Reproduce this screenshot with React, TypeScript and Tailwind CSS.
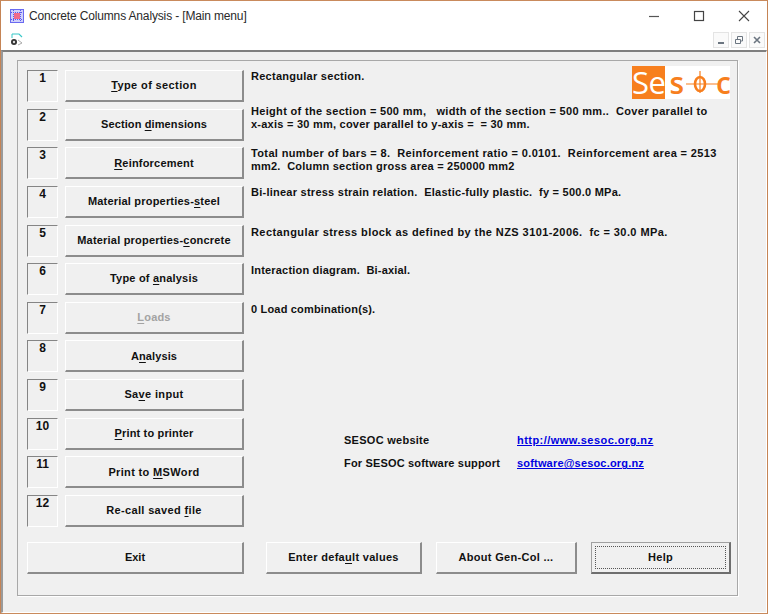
const sans = "font-['Liberation_Sans',Arial,sans-serif]";

type Row = { label: React.ReactNode; labelCls?: string; desc?: React.ReactNode; descCls?: string; disabled?: boolean };

const rows: Row[] = [
  {
    label: <><u>T</u>ype of section</>,
    labelCls: "tracking-[0.38px]",
    desc: "Rectangular section.",
    descCls: "tracking-[0.27px]",
  },
  {
    label: <>Section <u>d</u>imensions</>,
    labelCls: "tracking-[0.12px]",
    desc: (
      <>
        Height of the section = 500 mm,&nbsp;&nbsp; width of the section = 500 mm..&nbsp; Cover parallel to
        <br />
        <span className="tracking-[0.24px]">x-axis = 30 mm, cover parallel to y-axis = &nbsp;= 30 mm.</span>
      </>
    ),
    descCls: "-mt-[4px] h-[42.64px]",
  },
  {
    label: <><u>R</u>einforcement</>,
    desc: (
      <>
        <span className="tracking-[0.365px]">Total number of bars = 8.&nbsp; Reinforcement ratio = 0.0101.&nbsp; Reinforcement area = 2513</span>
        <br />
        <span className="tracking-[0.22px]">mm2.&nbsp; Column section gross area = 250000 mm2</span>
      </>
    ),
  },
  {
    label: <>Material properties-<u>s</u>teel</>,
    desc: "Bi-linear stress strain relation.  Elastic-fully plastic.  fy = 500.0 MPa.",
    descCls: "tracking-[0.25px]",
  },
  {
    label: <>Material properties-<u>c</u>oncrete</>,
    desc: "Rectangular stress block as defined by the NZS 3101-2006.  fc = 30.0 MPa.",
    descCls: "pt-[1px] tracking-[0.42px]",
  },
  {
    label: <>Type of <u>a</u>nalysis</>,
    desc: "Interaction diagram.  Bi-axial.",
    descCls: "pt-[1px] tracking-[0.19px]",
  },
  {
    label: <><u>L</u>oads</>,
    desc: "0 Load combination(s).",
    descCls: "pt-[1px] tracking-[0.18px]",
    disabled: true,
  },
  { label: <>A<u>n</u>alysis</>, labelCls: "tracking-[0.1px]" },
  { label: <>Sa<u>v</u>e input</>, labelCls: "tracking-[0.35px]" },
  { label: <><u>P</u>rint to printer</>, labelCls: "tracking-[0.15px]" },
  { label: <>Print to <u>M</u>SWord</>, labelCls: "tracking-[0.35px]" },
  { label: <>Re-call saved <u>f</u>ile</>, labelCls: "tracking-[0.35px]" },
];

function Btn({
  children,
  className = "",
  labelCls = "tracking-[0.2px]",
  disabled,
}: {
  children: React.ReactNode;
  className?: string;
  labelCls?: string;
  disabled?: boolean;
}) {
  return (
    <div
      className={
        "flex h-[32px] items-center justify-center border-t border-l border-t-white border-l-white border-r-2 border-b-2 border-r-[#8c8c8c] border-b-[#8c8c8c] text-[11px] font-bold underline-offset-2 " +
        (disabled ? "text-[#a3a3a3] " : "text-[#111] ") +
        className
      }
    >
      <span className={labelCls}>{children}</span>
    </div>
  );
}

function Logo() {
  const open = "font-['Open_Sans',sans-serif]";
  return (
    <div className={"absolute top-[5px] right-[7px] flex h-[33px] w-[98px] bg-white text-[#f77f1e] " + open}>
      <div className="flex w-[36px] items-center justify-center bg-[#f77f1e] text-[31px] leading-none tracking-[-0.5px] text-white">Se</div>
      <div className="flex flex-1 items-center pl-[4px]">
        <span className="text-[30px] leading-none font-semibold">s</span>
        <svg width="33" height="33" viewBox="0 0 33 33" className="ml-[2px] shrink-0">
          <ellipse cx="14" cy="18" rx="5" ry="7" fill="none" stroke="#f77f1e" strokeWidth="2.6" />
          <path d="M0 18H32M14 5V27" stroke="#f77f1e" strokeWidth="1.2" />
        </svg>
        <span className="-ml-[3px] text-[30px] leading-none font-semibold">c</span>
      </div>
    </div>
  );
}

export default function App() {
  return (
    <div className={"flex h-[614px] w-[768px] flex-col overflow-hidden border-x border-y border-x-[#c58455] border-y-[#c98a5c] bg-white text-[#111] " + sans}>
      {/* title bar */}
      <div className="flex h-[29px] shrink-0 items-center pl-[9px]">
        <svg width="14" height="14" viewBox="0 0 14 14" className="shrink-0">
          <rect x="0.5" y="0.5" width="13" height="13" fill="#cfd0fa" stroke="#6a6af0" />
          <path d="M1 3.5H13M1 10.5H13M3.5 1V13M10.5 1V13" stroke="#5a5af0" strokeDasharray="1 1" />
          <rect x="4" y="4" width="6" height="6" fill="#f06a8a" />
        </svg>
        <span className="ml-[5px] text-[12px] tracking-[-0.15px] text-[#2a2a2a]">Concrete Columns Analysis - [Main menu]</span>
        <div className="ml-auto flex items-center">
          <svg width="12" height="12" viewBox="0 0 12 12" className="mr-[33px]"><path d="M1 6.5H11" stroke="#555" strokeWidth="1.2" /></svg>
          <svg width="12" height="12" viewBox="0 0 12 12" className="mr-[33px]"><rect x="1.5" y="1.5" width="9" height="9" fill="none" stroke="#444" strokeWidth="1.2" /></svg>
          <svg width="12" height="12" viewBox="0 0 12 12" className="mr-[17px]"><path d="M1 1L11 11M11 1L1 11" stroke="#444" strokeWidth="1.1" /></svg>
        </div>
      </div>

      {/* menu bar */}
      <div className="flex h-[20px] shrink-0 items-center pl-[9px]">
        <svg width="14" height="14" viewBox="0 0 14 14">
          <path d="M2 1H9L12 4" fill="none" stroke="#38c8c8" strokeWidth="1.2" />
          <path d="M2 1V5" stroke="#38c8c8" />
          <circle cx="4" cy="9" r="3" fill="#333" />
          <circle cx="4" cy="9" r="1.2" fill="#ddd" />
          <path d="M8 7L12 10L8 12" fill="none" stroke="#aaa" />
        </svg>
        <div className="ml-auto mr-[2px] flex gap-[2px]">
          {["min", "restore", "close"].map((k) => (
            <div key={k} className="flex h-[16px] w-[16px] items-center justify-center border border-[#e4e4e4] bg-[#fafafa]">
              <svg width="10" height="10" viewBox="0 0 10 10">
                {k === "min" && <path d="M2 8H8" stroke="#6b7580" strokeWidth="2" />}
                {k === "restore" && <path d="M1.5 4.5H6.5V8.5H1.5ZM3.5 4V1.5H8.5V6H7" fill="none" stroke="#6b7580" />}
                {k === "close" && <path d="M2 2L8 8M8 2L2 8" stroke="#6b7580" strokeWidth="1.6" />}
              </svg>
            </div>
          ))}
        </div>
      </div>

      {/* child window */}
      <div className="flex min-h-0 flex-1 flex-col border-t-2 border-l-2 border-t-[#7f7f7f] border-l-[#9a9a9a] border-r border-b border-r-white border-b-white bg-[#f0f0f0] pt-[8px] pr-[28px] pb-[16px] pl-[14px]">
        <div className="relative flex flex-1 flex-col border border-[#a8a8a8] pt-[9px] pl-[9px] shadow-[1px_1px_0_#fff]">
          <Logo />
          <div className="flex">
            <div className="flex w-[217px] shrink-0 flex-col gap-[6.64px]">
              {rows.map((r, i) => (
                <div key={i} className="flex">
                  <div className="flex h-[32px] w-[31px] shrink-0 justify-center border-t border-l border-t-[#858585] border-l-[#858585] border-r border-b border-r-white border-b-white pt-[1px] text-[12px] leading-[13px] font-bold">
                    {i + 1}
                  </div>
                  <Btn className="ml-[7px] flex-1" labelCls={r.labelCls} disabled={r.disabled}>{r.label}</Btn>
                </div>
              ))}
            </div>
            <div className="ml-[7px] flex min-w-0 flex-1 flex-col text-[11px] leading-[13px] font-bold tracking-[0.32px] whitespace-pre-wrap">
              {rows.slice(0, 7).map((r, i) => (
                <div key={i} className={"h-[38.64px] " + (r.descCls ?? "")}>{r.desc}</div>
              ))}
              <div className="mt-[94px] ml-[93px] grid grid-cols-[173px_1fr] gap-y-[10px]">
                <span className="tracking-[0.27px]">SESOC website</span>
                <span className="tracking-[0.45px] text-[#0000e0] underline">http://www.sesoc.org.nz</span>
                <span className="tracking-[0.17px]">For SESOC software support</span>
                <span className="tracking-[0.18px] text-[#0000e0] underline">software@sesoc.org.nz</span>
              </div>
            </div>
          </div>
          <div className="mt-[15px] flex">
            <Btn className="w-[217px]" labelCls="tracking-[0px]">Exit</Btn>
            <Btn className="ml-[22px] w-[156px]" labelCls="tracking-[0.3px]">Enter defa<u>u</u>lt values</Btn>
            <Btn className="ml-[14px] w-[141px]" labelCls="tracking-[0.3px]">About Gen-Col ...</Btn>
            <div className="ml-[14px] h-[32px] w-[140px] border border-t-[#a0a0a0] border-l-[#a0a0a0] border-r-2 border-b-2 border-r-[#6e6e6e] border-b-[#6e6e6e] p-[3px]">
              <div className="flex h-full items-center justify-center border border-dotted border-[#555] text-[11px] font-bold tracking-[0.35px]">Help</div>
            </div>
          </div>
        </div>
      </div>
    </div>
  );
}
